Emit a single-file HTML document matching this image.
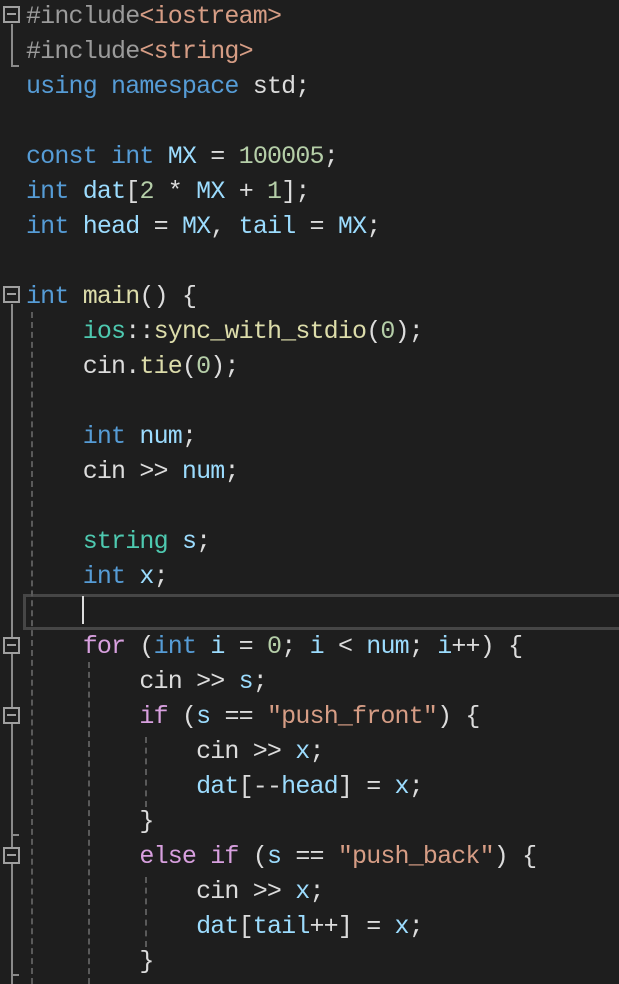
<!DOCTYPE html>
<html><head><meta charset="utf-8"><style>
html,body{margin:0;padding:0;background:#1e1e1e;width:619px;height:984px;overflow:hidden;position:relative}
.l{position:absolute;left:26px;height:30px;line-height:30px;white-space:pre;font-family:"Liberation Mono",monospace;font-size:25px;letter-spacing:-0.83px;color:#dcdcdc;margin-top:2px}
.p{color:#9b9b9b}.s{color:#d69d85}.k{color:#569cd6}.t{color:#4ec9b0}.v{color:#9cdcfe}.f{color:#dcdcaa}.n{color:#b5cea8}.c{color:#d8a0df}.o{color:#b4b4b4}
.box{position:absolute;left:3px;width:13px;height:13px;border:2px solid #a0a0a0;background:#1e1e1e}
.box:after{content:"";position:absolute;left:2px;right:2px;top:5px;height:2px;background:#a0a0a0}
.vl{position:absolute;width:2px;background:#8a8a8a}
.dg{position:absolute;width:0;border-left:2px dashed #5a5a5a}
</style></head><body>
<div style="position:absolute;left:23px;top:594px;width:600px;height:30px;border:3px solid #464646;border-right:none"></div>
<div style="position:absolute;left:82px;top:596px;width:2px;height:28px;background:#dcdcdc"></div>

<div class="box" style="top:6px"></div>
<div class="vl" style="left:11px;top:24px;height:42px"></div>
<div class="vl" style="left:11px;top:65px;width:8px;height:2px"></div>

<div class="box" style="top:286px"></div>
<div class="vl" style="left:11px;top:304px;height:680px"></div>
<div class="box" style="top:637px"></div>
<div class="box" style="top:707px"></div>
<div class="vl" style="left:11px;top:834px;width:8px;height:2px"></div>
<div class="box" style="top:847px"></div>
<div class="vl" style="left:11px;top:974px;width:8px;height:2px"></div>

<div class="dg" style="left:31px;top:312px;height:672px"></div>
<div class="dg" style="left:88px;top:662px;height:322px"></div>
<div class="dg" style="left:145px;top:737px;height:70px"></div>
<div class="dg" style="left:145px;top:877px;height:70px"></div>

<div class="l" style="top:0px"><span class="p">#include</span><span class="s">&lt;iostream&gt;</span></div>
<div class="l" style="top:35px"><span class="p">#include</span><span class="s">&lt;string&gt;</span></div>
<div class="l" style="top:70px"><span class="k">using namespace</span> std;</div>
<div class="l" style="top:140px"><span class="k">const int</span> <span class="v">MX</span> = <span class="n">100005</span>;</div>
<div class="l" style="top:175px"><span class="k">int</span> <span class="v">dat</span>[<span class="n">2</span> * <span class="v">MX</span> + <span class="n">1</span>];</div>
<div class="l" style="top:210px"><span class="k">int</span> <span class="v">head</span> = <span class="v">MX</span>, <span class="v">tail</span> = <span class="v">MX</span>;</div>
<div class="l" style="top:280px"><span class="k">int</span> <span class="f">main</span>() {</div>
<div class="l" style="top:315px">    <span class="t">ios</span>::<span class="f">sync_with_stdio</span>(<span class="n">0</span>);</div>
<div class="l" style="top:350px">    cin.<span class="f">tie</span>(<span class="n">0</span>);</div>
<div class="l" style="top:420px">    <span class="k">int</span> <span class="v">num</span>;</div>
<div class="l" style="top:455px">    cin &gt;&gt; <span class="v">num</span>;</div>
<div class="l" style="top:525px">    <span class="t">string</span> <span class="v">s</span>;</div>
<div class="l" style="top:560px">    <span class="k">int</span> <span class="v">x</span>;</div>
<div class="l" style="top:630px">    <span class="c">for</span> (<span class="k">int</span> <span class="v">i</span> = <span class="n">0</span>; <span class="v">i</span> &lt; <span class="v">num</span>; <span class="v">i</span>++) {</div>
<div class="l" style="top:665px">        cin &gt;&gt; <span class="v">s</span>;</div>
<div class="l" style="top:700px">        <span class="c">if</span> (<span class="v">s</span> == <span class="s">"push_front"</span>) {</div>
<div class="l" style="top:735px">            cin &gt;&gt; <span class="v">x</span>;</div>
<div class="l" style="top:770px">            <span class="v">dat</span>[--<span class="v">head</span>] = <span class="v">x</span>;</div>
<div class="l" style="top:805px">        }</div>
<div class="l" style="top:840px">        <span class="c">else if</span> (<span class="v">s</span> == <span class="s">"push_back"</span>) {</div>
<div class="l" style="top:875px">            cin &gt;&gt; <span class="v">x</span>;</div>
<div class="l" style="top:910px">            <span class="v">dat</span>[<span class="v">tail</span>++] = <span class="v">x</span>;</div>
<div class="l" style="top:945px">        }</div>
<div class="l" style="top:980px">        <span class="c">else if</span> (<span class="v">s</span> == <span class="s">"pop_front"</span>) {</div>
</body></html>
